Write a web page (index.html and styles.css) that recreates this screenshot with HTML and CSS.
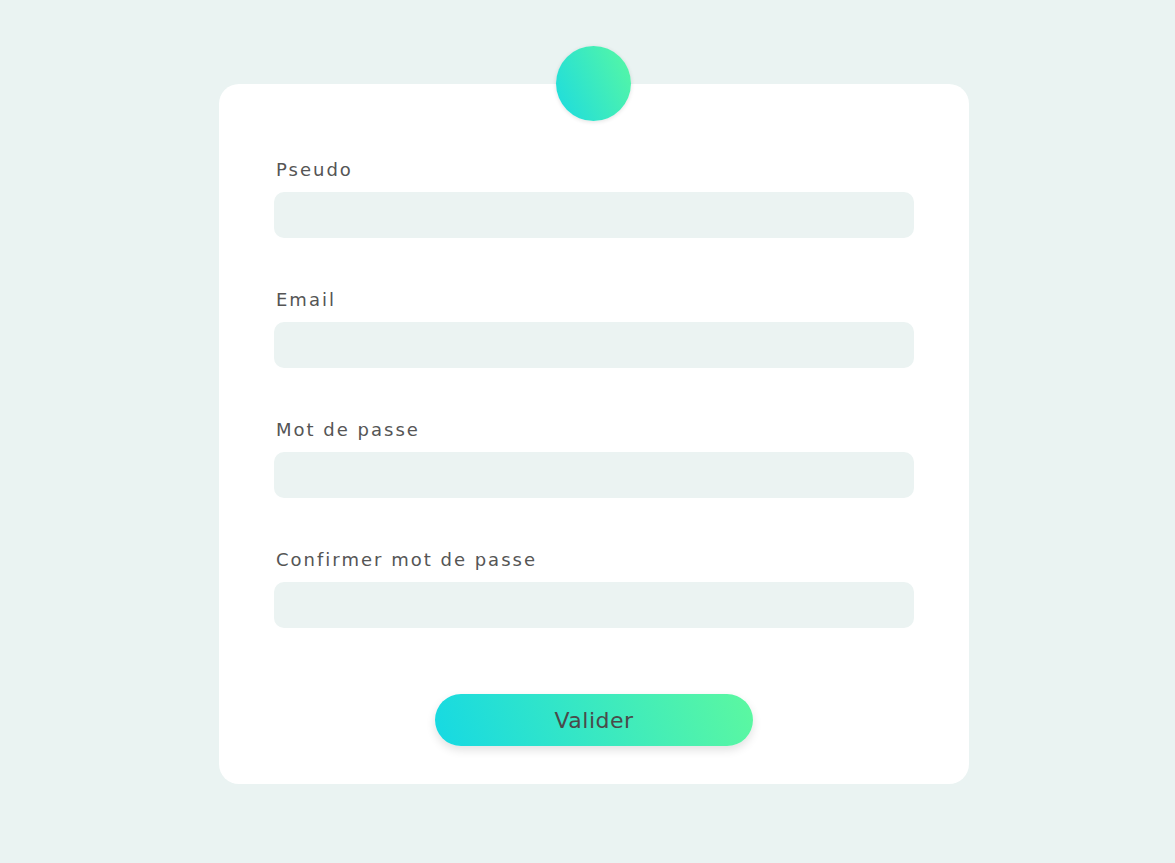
FILE: index.html
```html
<!DOCTYPE html>
<html lang="fr">
<head>
<meta charset="utf-8">
<title>Inscription</title>
<link rel="stylesheet" href="styles.css">
</head>
<body>
<main class="page">
  <form class="card">
    <div class="avatar"></div>
    <div class="field">
      <label class="label" for="pseudo">Pseudo</label>
      <input class="input" id="pseudo" type="text">
    </div>
    <div class="field">
      <label class="label" for="email">Email</label>
      <input class="input" id="email" type="email">
    </div>
    <div class="field">
      <label class="label" for="mdp">Mot de passe</label>
      <input class="input" id="mdp" type="password">
    </div>
    <div class="field field-last">
      <label class="label" for="mdp2">Confirmer mot de passe</label>
      <input class="input" id="mdp2" type="password">
    </div>
    <div class="actions">
      <button class="button" type="submit">Valider</button>
    </div>
  </form>
</main>
</body>
</html>
```
FILE: styles.css
```css
* { box-sizing: border-box; }
html, body { margin: 0; padding: 0; }
body {
  background: #eaf3f2;
  font-family: "DejaVu Sans", "Noto Sans", sans-serif;
  min-height: 863px;
}
.page {
  display: flex;
  justify-content: center;
  padding-top: 84px;
  padding-left: 13px;
}
.card {
  position: relative;
  width: 750px;
  height: 700px;
  background: #ffffff;
  border-radius: 20px;
  padding: 74px 55px 38px 55px;
  display: flex;
  flex-direction: column;
}
.avatar {
  position: absolute;
  left: 337px;
  top: -38px;
  width: 75px;
  height: 75px;
  border-radius: 50%;
  background: linear-gradient(65deg, #1cdbe0 0%, #58f8a2 100%);
  box-shadow: 0 1px 4px rgba(0,0,0,0.12);
}
.field {
  display: flex;
  flex-direction: column;
  gap: 10px;
  margin-bottom: 50px;
}
.field-last { margin-bottom: 66px; }
.label {
  font-size: 18px;
  line-height: 24px;
  letter-spacing: 2px;
  color: #555555;
  padding-left: 2px;
}
.input {
  width: 640px;
  height: 46px;
  border: none;
  border-radius: 10px;
  background: #ebf3f2;
  outline: none;
  margin: 0;
}
.actions {
  display: flex;
  justify-content: center;
}
.button {
  width: 318px;
  height: 52px;
  border: none;
  border-radius: 26px;
  background: linear-gradient(70deg, #16d9e3 0%, #5cf8a0 100%);
  box-shadow: 0 4px 10px rgba(0,0,0,0.12);
  font-family: "DejaVu Sans", "Noto Sans", sans-serif;
  font-size: 22px;
  color: #4a4a4a;
  letter-spacing: 0.5px;
  cursor: pointer;
}
```
